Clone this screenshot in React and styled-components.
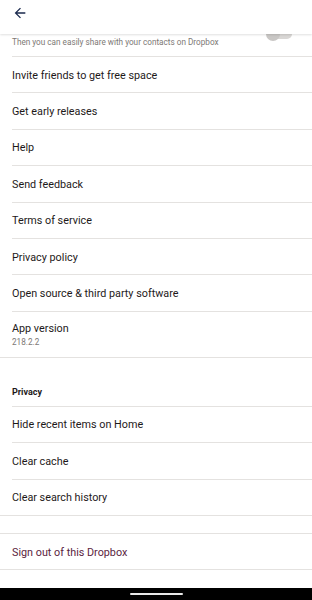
import React, { useEffect, useRef } from "react";
import styled, { createGlobalStyle } from "styled-components";

const colors = {
	text: "#1e1919",
	muted: "#7d7875",
	divider: "#e4e2e0",
	navy: "#1b2a4e",
	plum: "#5a1d3e",
};

const GlobalStyle = createGlobalStyle`
	html, body {
		margin: 0;
		padding: 0;
		background: #fff;
	}
	body {
		font-family: "Roboto", "Liberation Sans", sans-serif;
		-webkit-font-smoothing: antialiased;
	}
`;

const Screen = styled.div`
	display: flex;
	flex-direction: column;
	width: 312px;
	height: 600px;
	background: #fff;
	overflow: hidden;
`;

const Header = styled.header`
	position: relative;
	z-index: 1;
	display: flex;
	align-items: center;
	height: 34px;
	padding-left: 12px;
	background: #fff;
	box-shadow: 0 1px 2px rgba(0, 0, 0, 0.12);
	flex-shrink: 0;
`;

const BackButton = styled.button`
	display: flex;
	align-items: center;
	justify-content: center;
	width: 16px;
	height: 16px;
	margin-top: -8px;
	padding: 0;
	border: none;
	background: none;
	color: ${colors.navy};
`;

const List = styled.div`
	flex: 1;
	overflow: hidden;
`;

const Row = styled.div`
	box-sizing: border-box;
	display: flex;
	align-items: center;
	justify-content: space-between;
	height: ${(p) => (p.$tall ? "46px" : "36.4px")};
	margin-left: ${(p) => (p.$full ? "0" : "12px")};
	padding-left: ${(p) => (p.$full ? "12px" : "0")};
	padding-top: 1px;
	padding-right: 20px;
	border-bottom: 1px solid ${colors.divider};
`;

const RowText = styled.div`
	display: flex;
	flex-direction: column;
	gap: 2px;
`;

const Title = styled.span`
	font-size: 10.8px;
	color: ${(p) => p.$color || colors.text};
`;

const Sub = styled.span`
	font-size: 8.2px;
	color: ${colors.muted};
`;

const SectionHeader = styled.div`
	box-sizing: border-box;
	display: flex;
	align-items: flex-end;
	height: 49px;
	margin-left: 12px;
	padding-bottom: 9px;
	font-size: 9px;
	font-weight: 700;
	color: ${colors.text};
	border-bottom: 1px solid ${colors.divider};
`;

const Spacer = styled.div`
	height: 18px;
	border-bottom: 1px solid ${colors.divider};
	box-sizing: border-box;
`;

const Toggle = styled.div`
	position: relative;
	width: 24px;
	height: 10px;
	border-radius: 5px;
	background: #d9d7d5;
	flex-shrink: 0;
	&::after {
		content: "";
		position: absolute;
		left: -2px;
		top: -2px;
		width: 14px;
		height: 14px;
		border-radius: 50%;
		background: #c9c7c5;
	}
`;

const NavBar = styled.div`
	display: flex;
	justify-content: center;
	align-items: center;
	height: 12px;
	margin-top: 18px;
	background: #000;
	flex-shrink: 0;
`;

const Pill = styled.div`
	width: 53px;
	height: 2px;
	border-radius: 1px;
	background: #e8e8e8;
`;

const ArrowBack = () => (
	<svg width="16" height="16" viewBox="0 0 24 24" fill="currentColor">
		<path d="M20 11H7.83l5.59-5.59L12 4l-8 8 8 8 1.41-1.41L7.83 13H20v-2z" />
	</svg>
);

const links = [
	"Invite friends to get free space",
	"Get early releases",
	"Help",
	"Send feedback",
	"Terms of service",
	"Privacy policy",
	"Open source & third party software",
];

const privacy = ["Hide recent items on Home", "Clear cache", "Clear search history"];

const App = () => {
	const listRef = useRef(null);

	useEffect(() => {
		if (listRef.current) listRef.current.scrollTop = 23;
	}, []);

	return (
		<>
			<GlobalStyle />
			<Screen>
				<Header>
					<BackButton aria-label="Back">
						<ArrowBack />
					</BackButton>
				</Header>
				<List ref={listRef}>
					<Row $tall>
						<RowText>
							<Title>Sync contacts</Title>
							<Sub>Then you can easily share with your contacts on Dropbox</Sub>
						</RowText>
						<Toggle />
					</Row>
					{links.map((l) => (
						<Row key={l}>
							<Title>{l}</Title>
						</Row>
					))}
					<Row $tall $full>
						<RowText>
							<Title>App version</Title>
							<Sub>218.2.2</Sub>
						</RowText>
					</Row>
					<SectionHeader>Privacy</SectionHeader>
					{privacy.map((l, i) => (
						<Row key={l} $full={i === privacy.length - 1}>
							<Title>{l}</Title>
						</Row>
					))}
					<Spacer />
					<Row $full>
						<Title $color={colors.plum}>Sign out of this Dropbox</Title>
					</Row>
				</List>
				<NavBar>
					<Pill />
				</NavBar>
			</Screen>
		</>
	);
};

export default App;
